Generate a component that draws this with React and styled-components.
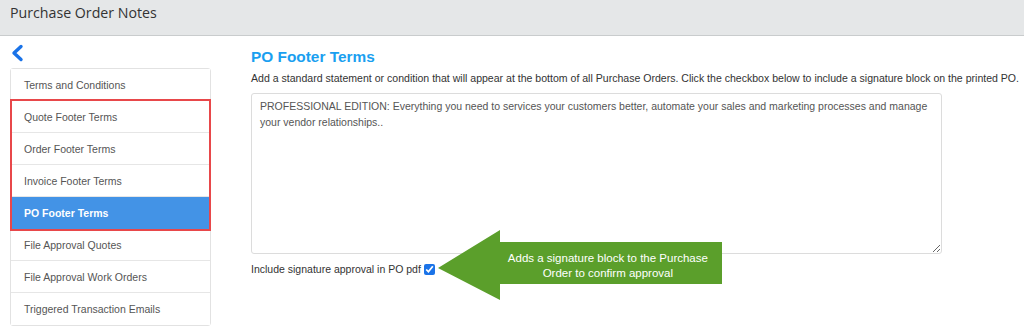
import React from 'react'
import styled, { createGlobalStyle } from 'styled-components'

const GlobalStyle = createGlobalStyle`
    body {
        margin: 0;
        background: #ffffff;
        font-family: "Liberation Sans", Arial, sans-serif;
        color: #333333;
    }
`;

const menu = [
    { label: 'Terms and Conditions' },
    { label: 'Quote Footer Terms', marked: true },
    { label: 'Order Footer Terms', marked: true },
    { label: 'Invoice Footer Terms', marked: true },
    { label: 'PO Footer Terms', marked: true, active: true },
    { label: 'File Approval Quotes' },
    { label: 'File Approval Work Orders' },
    { label: 'Triggered Transaction Emails' },
];

export default function App() {
    const marked = menu.filter(m => m.marked);
    const before = menu.slice(0, menu.indexOf(marked[0]));
    const after = menu.slice(menu.indexOf(marked[marked.length - 1]) + 1);

    return <Page>
        <GlobalStyle />
        <Header>
            <Title>Purchase Order Notes</Title>
        </Header>
        <Body>
            <Sidebar>
                <BackLink aria-label="Back">
                    <svg width="13" height="18" viewBox="0 0 13 18">
                        <path d="M10 2.5 L3 9 L10 15.5" fill="none" stroke="#1a73e8" strokeWidth="3.4" strokeLinecap="round" strokeLinejoin="round" />
                    </svg>
                </BackLink>
                <Menu>
                    {before.map(m => <MenuItem key={m.label}>{m.label}</MenuItem>)}
                    <Highlight>
                        {marked.map(m => <MenuItem key={m.label} $active={m.active}>{m.label}</MenuItem>)}
                    </Highlight>
                    {after.map((m, i) => <MenuItem key={m.label} $last={i === after.length - 1}>{m.label}</MenuItem>)}
                </Menu>
            </Sidebar>
            <Main>
                <Heading>PO Footer Terms</Heading>
                <Description>
                    Add a standard statement or condition that will appear at the bottom of all Purchase Orders. Click the checkbox below to include a signature block on the printed PO.
                </Description>
                <Notes defaultValue="PROFESSIONAL EDITION: Everything you need to services your customers better, automate your sales and marketing processes and manage your vendor relationships.." />
                <CheckRow>
                    <CheckLabel htmlFor="sig">Include signature approval in PO pdf</CheckLabel>
                    <Check id="sig" type="checkbox" defaultChecked />
                    <Callout>
                        <svg width="284" height="70" viewBox="0 0 284 70">
                            <polygon points="0,38 62,0 62,12 284,12 284,54 62,54 62,70" fill="#5b9f2b" />
                        </svg>
                        <CalloutText>Adds a signature block to the Purchase<br />Order to confirm approval</CalloutText>
                    </Callout>
                </CheckRow>
            </Main>
        </Body>
    </Page>;
}

const Page = styled.div`
    width: 1024px;
    height: 329px;
    overflow: hidden;
`;
const Header = styled.div`
    height: 36px;
    box-sizing: border-box;
    background: #e5e7e8;
    border-bottom: 1px solid #c9cccd;
    display: flex;
    align-items: center;
    padding-left: 10px;
`;
const Title = styled.div`
    font-family: "Open Sans", sans-serif;
    font-size: 14.2px;
    color: #333333;
    margin-top: -11px;
`;
const Body = styled.div`
    display: flex;
    gap: 40px;
    padding-left: 10px;
`;
const Sidebar = styled.div`
    width: 201px;
    flex-shrink: 0;
    padding-top: 8px;
`;
const BackLink = styled.a`
    display: block;
    margin-left: 1px;
    height: 18px;
    margin-bottom: 6px;
    cursor: pointer;
    svg {
        display: block;
    }
`;
const Menu = styled.div`
    border: 1px solid #e2e2e2;
    border-radius: 3px;
    background: #ffffff;
`;
const Highlight = styled.div`
    position: relative;
    z-index: 1;
    box-shadow: 0 0 0 2px #e8474a;
    margin: 0 1px;
`;
const MenuItem = styled.div`
    height: 32px;
    box-sizing: border-box;
    display: flex;
    align-items: center;
    padding-left: 13px;
    font-size: 10.5px;
    color: ${p => p.$active ? '#ffffff' : '#555555'};
    font-weight: ${p => p.$active ? 'bold' : 'normal'};
    background: ${p => p.$active ? '#4393e6' : '#ffffff'};
    border-bottom: ${p => p.$last || p.$active ? 'none' : '1px solid #e6e6e6'};
    ${Highlight} & {
        padding-left: 12px;
    }
`;
const Main = styled.div`
    flex: 1;
    padding-top: 11px;
`;
const Heading = styled.div`
    font-size: 15.4px;
    font-weight: bold;
    color: #1a9ff0;
    line-height: 20px;
`;
const Description = styled.div`
    font-size: 10.55px;
    line-height: 14px;
    margin-top: 4px;
    color: #333333;
    white-space: nowrap;
`;
const Notes = styled.textarea`
    display: block;
    width: 691px;
    height: 161px;
    box-sizing: border-box;
    margin-top: 8px;
    border: 1px solid #dcdcdc;
    border-radius: 3px;
    padding: 4px 4px 5px 8px;
    font-family: "Liberation Sans", Arial, sans-serif;
    font-size: 10.5px;
    line-height: 16px;
    color: #555555;
    resize: vertical;
    outline: none;
`;
const CheckRow = styled.div`
    display: flex;
    align-items: center;
    margin-top: 6px;
    height: 18px;
`;
const CheckLabel = styled.label`
    font-size: 10.5px;
    color: #333333;
`;
const Check = styled.input`
    width: 11px;
    height: 11px;
    margin: 0 0 0 3px;
    accent-color: #1a73e8;
`;
const Callout = styled.div`
    position: relative;
    width: 284px;
    height: 70px;
    margin: -30px 0 -22px 3px;
    svg {
        display: block;
    }
`;
const CalloutText = styled.div`
    position: absolute;
    left: 56px;
    right: 0;
    top: 21px;
    text-align: center;
    color: #ffffff;
    font-size: 11.5px;
    line-height: 15px;
`;
